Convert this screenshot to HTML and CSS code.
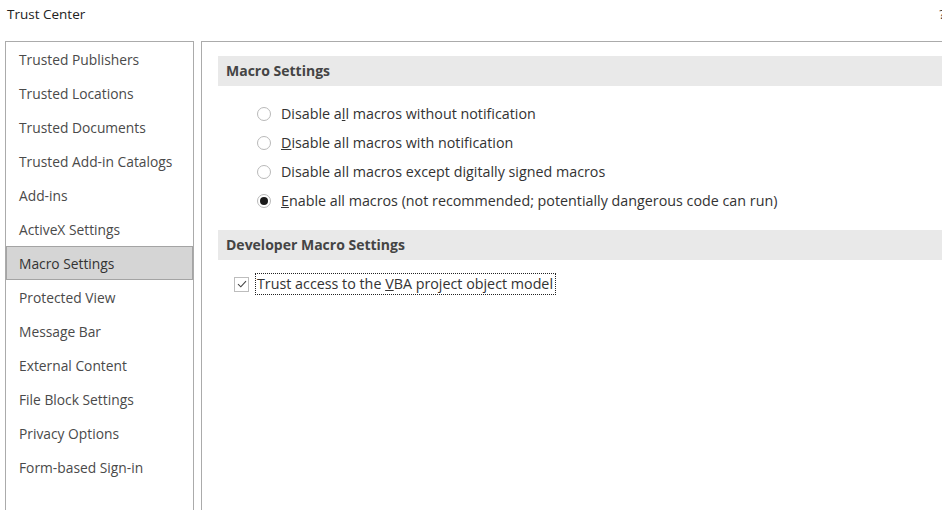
FILE: index.html
```html
<!DOCTYPE html>
<html>
<head>
<meta charset="utf-8">
<title>Trust Center</title>
<link rel="stylesheet" href="styles.css">
</head>
<body>
<div class="window">
  <header class="titlebar">
    <span class="title">Trust Center</span>
    <span class="help">?</span>
  </header>
  <div class="main">
    <nav class="nav">
      <div class="nav-item">Trusted Publishers</div>
      <div class="nav-item">Trusted Locations</div>
      <div class="nav-item">Trusted Documents</div>
      <div class="nav-item">Trusted Add-in Catalogs</div>
      <div class="nav-item">Add-ins</div>
      <div class="nav-item">ActiveX Settings</div>
      <div class="nav-item selected">Macro Settings</div>
      <div class="nav-item">Protected View</div>
      <div class="nav-item">Message Bar</div>
      <div class="nav-item">External Content</div>
      <div class="nav-item">File Block Settings</div>
      <div class="nav-item">Privacy Options</div>
      <div class="nav-item">Form-based Sign-in</div>
    </nav>
    <section class="content">
      <div class="band">Macro Settings</div>
      <div class="radios">
        <div class="radio-row"><span class="radio"></span><span class="label">Disable a<u>l</u>l macros without notification</span></div>
        <div class="radio-row"><span class="radio"></span><span class="label"><u>D</u>isable all macros with notification</span></div>
        <div class="radio-row"><span class="radio"></span><span class="label">Disable all macros except di<u>g</u>itally signed macros</span></div>
        <div class="radio-row"><span class="radio checked"></span><span class="label"><u>E</u>nable all macros (not recommended; potentially dangerous code can run)</span></div>
      </div>
      <div class="band band-dev">Developer Macro Settings</div>
      <div class="check-row">
        <span class="checkbox">
          <svg width="12" height="12" viewBox="0 0 12 12"><path d="M2 6.2 L4.8 8.8 L10 3.2" fill="none" stroke="#444" stroke-width="1.1"/></svg>
        </span>
        <span class="check-label">Trust access to the <u>V</u>BA project object model</span>
      </div>
    </section>
  </div>
</div>
</body>
</html>
```
FILE: styles.css
```css
* { box-sizing: border-box; }
html, body {
  margin: 0;
  padding: 0;
  background: #ffffff;
}
body {
  width: 942px;
  height: 510px;
  overflow: hidden;
  font-family: "Open Sans", "Noto Sans", "Liberation Sans", sans-serif;
  color: #333;
}
.window {
  width: 942px;
  height: 510px;
  display: flex;
  flex-direction: column;
}
.titlebar {
  height: 41px;
  display: flex;
  justify-content: space-between;
  align-items: flex-start;
  padding: 4px 0 0 7px;
  font-size: 13.5px;
  color: #222;
}
.title { line-height: 20px; }
.help {
  line-height: 20px;
  margin-right: -3px;
  color: #333;
}
.main {
  flex: 1;
  display: flex;
  padding-left: 5px;
  min-height: 0;
}
.nav {
  width: 189px;
  border: 1px solid #ababab;
  border-bottom: none;
  padding: 0;
  flex-shrink: 0;
}
.nav-item {
  height: 34px;
  line-height: 33px;
  padding-top: 1px;
  padding-left: 13px;
  font-size: 13.8px;
  color: #4a4a4a;
  white-space: nowrap;
}
.nav-item.selected {
  background: #d5d5d5;
  border: 1px solid #a4a4a4;
  line-height: 31px;
  padding-left: 12px;
  color: #333;
}
.content {
  flex: 1;
  margin-left: 7px;
  border-left: 1px solid #ababab;
  border-top: 1px solid #ababab;
  padding: 14px 0 0 16px;
}
.band {
  height: 30px;
  line-height: 30px;
  background: #e9e9e9;
  padding-left: 8px;
  font-weight: 700;
  font-size: 14px;
  color: #444;
}
.radios {
  padding: 13px 0 15px 39px;
}
.radio-row {
  height: 29px;
  display: flex;
  align-items: center;
}
.radio {
  width: 14px;
  height: 14px;
  border: 1px solid #b9b9b9;
  border-radius: 50%;
  background: #fff;
  flex-shrink: 0;
  display: flex;
  align-items: center;
  justify-content: center;
}
.radio.checked::after {
  content: "";
  width: 8px;
  height: 8px;
  border-radius: 50%;
  background: #1a1a1a;
}
.label {
  margin-left: 10px;
  font-size: 14.3px;
  color: #333;
  white-space: nowrap;
}
.check-row {
  height: 24px;
  margin-top: 12px;
  display: flex;
  align-items: center;
  padding-left: 16px;
}
.checkbox {
  width: 15px;
  height: 15px;
  border: 1px solid #bdbdbd;
  background: #fff;
  display: flex;
  align-items: center;
  justify-content: center;
  flex-shrink: 0;
}
.check-label {
  margin-left: 6px;
  padding: 1px 2px 1px 1px;
  border: 1px dotted #222;
  font-size: 14.3px;
  color: #333;
  white-space: nowrap;
  line-height: 18px;
}
```
